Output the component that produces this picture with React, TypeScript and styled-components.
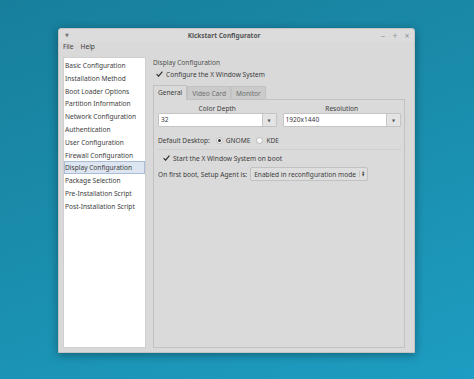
import styled, { createGlobalStyle } from "styled-components";

const GlobalStyle = createGlobalStyle`
  html, body {
    margin: 0;
    padding: 0;
  }
  body {
    font-family: "Noto Sans", "DejaVu Sans", sans-serif;
    font-size: 6.6px;
    color: #3c3c3c;
  }
`;

const Desktop = styled.div`
  width: 474px;
  height: 379px;
  box-sizing: border-box;
  padding: 28px 0 0 58px;
  background: linear-gradient(160deg, #177f9c 0%, #1a8cab 45%, #1d9dc2 100%);
  overflow: hidden;
`;

const Window = styled.div`
  width: 357px;
  height: 325px;
  background: #d9d9d9;
  border: 1px solid #c4c4c4;
  border-radius: 3px 3px 0 0;
  box-sizing: border-box;
  box-shadow: 0 2px 10px rgba(0, 0, 0, 0.35);
  display: flex;
  flex-direction: column;
`;

const TitleBar = styled.div`
  height: 13px;
  flex: none;
  display: flex;
  align-items: center;
  padding: 0 3px 0 6px;
  background: #dcdcdc;
  border-radius: 3px 3px 0 0;
  line-height: 13px;
  overflow: hidden;
`;

const MenuArrow = styled.span`
  width: 8px;
  font-size: 5px;
  color: #777;
`;

const Title = styled.div`
  flex: 1;
  text-align: center;
  font-weight: 700;
  color: #555;
  font-size: 6.5px;
  padding-right: 4px;
`;

const WinButtons = styled.div`
  display: flex;
  gap: 4px;
  color: #8e8e8e;
  font-size: 8px;
`;

const WinButton = styled.span`
  width: 8px;
  text-align: center;
`;

const MenuBar = styled.div`
  display: flex;
  flex: none;
  gap: 7px;
  padding: 0 4px;
  height: 10px;
  line-height: 10px;
  align-items: center;
`;

const Body = styled.div`
  flex: 1;
  display: flex;
  gap: 7px;
  padding: 5px 9px 4px 4px;
  min-height: 0;
`;

const Sidebar = styled.ul`
  list-style: none;
  margin: 0;
  padding: 1px 0 0;
  width: 83px;
  background: #fff;
  border: 1px solid #cfcfcf;
  box-sizing: border-box;
`;

const SideItem = styled.li<{ selected?: boolean }>`
  height: 12.8px;
  line-height: 11px;
  padding-left: 0;
  box-sizing: border-box;
  white-space: nowrap;
  background: ${(p) => (p.selected ? "#dde5f0" : "transparent")};
  border: 1px solid ${(p) => (p.selected ? "#a9bcd8" : "transparent")};
`;

const Main = styled.div`
  flex: 1;
  display: flex;
  flex-direction: column;
`;

const Heading = styled.div`
  height: 11px;
  line-height: 11px;
  color: #505050;
`;

const CheckRow = styled.label<{ indent?: number }>`
  display: flex;
  align-items: center;
  gap: 3px;
  height: 12px;
  padding-left: ${(p) => p.indent ?? 3}px;
`;

const Check = styled.span`
  width: 7px;
  display: flex;
  justify-content: center;
`;

const Tabs = styled.div`
  display: flex;
  align-items: flex-end;
  height: 15px;
  margin-top: 4px;
`;

const Tab = styled.div<{ active?: boolean }>`
  height: ${(p) => (p.active ? 15 : 13)}px;
  line-height: 13px;
  padding: 0 4px;
  box-sizing: border-box;
  background: ${(p) => (p.active ? "#dadada" : "#cbcbcb")};
  color: ${(p) => (p.active ? "#3c3c3c" : "#6e6e6e")};
  border: 1px solid #c2c2c2;
  border-bottom: none;
  margin-bottom: ${(p) => (p.active ? -1 : 0)}px;
  position: relative;
  z-index: ${(p) => (p.active ? 1 : 0)};
`;

const Pane = styled.div`
  flex: 1;
  border: 1px solid #c2c2c2;
  background: #dadada;
  padding: 3px 3px 0 4px;
  display: flex;
  flex-direction: column;
`;

const Columns = styled.div`
  display: grid;
  grid-template-columns: 1fr 1fr;
  gap: 6px;
`;

const Column = styled.div`
  display: flex;
  flex-direction: column;
`;

const ColLabel = styled.div`
  text-align: center;
  height: 10px;
  line-height: 11px;
`;

const Combo = styled.div`
  display: flex;
  height: 14px;
  background: #fff;
  border: 1px solid #c4c4c4;
  box-sizing: border-box;
  border-radius: 1px;
`;

const ComboText = styled.div`
  flex: 1;
  padding-left: 2px;
  line-height: 12px;
`;

const ComboBtn = styled.div`
  width: 13px;
  border-left: 1px solid #c8c8c8;
  background: #e4e4e4;
  display: flex;
  align-items: center;
  justify-content: center;
  font-size: 4px;
  color: #555;
`;

const Row = styled.div<{ top: number }>`
  display: flex;
  align-items: center;
  height: 14px;
  gap: 3px;
  margin-top: ${(p) => p.top}px;
`;

const Radio = styled.span<{ on?: boolean }>`
  width: 7px;
  height: 7px;
  border-radius: 50%;
  background: #fafafa;
  border: 1px solid #bbb;
  box-sizing: border-box;
  display: inline-flex;
  align-items: center;
  justify-content: center;
  margin-left: 3px;
  &::after {
    content: "";
    width: 3px;
    height: 3px;
    border-radius: 50%;
    background: ${(p) => (p.on ? "#333" : "transparent")};
  }
`;

const Separator = styled.div`
  height: 1px;
  background: #cecece;
  margin: 2px 0 2px;
`;

const SpinCombo = styled.div`
  display: flex;
  align-items: center;
  height: 14px;
  padding: 0 3px;
  gap: 3px;
  border: 1px solid #c2c2c2;
  border-radius: 2px;
  background: #dedede;
  box-sizing: border-box;
`;

const Arrows = styled.span`
  display: flex;
  flex-direction: column;
  font-size: 3px;
  line-height: 3px;
  color: #444;
  border-left: 1px solid #c4c4c4;
  padding-left: 2px;
`;

const CheckMark = () => (
  <svg width="7" height="6" viewBox="0 0 7 6">
    <path d="M0.6 3.2 L2.6 5.2 L6.4 0.6" fill="none" stroke="#333" strokeWidth="1.2" />
  </svg>
);

const sections = [
  "Basic Configuration",
  "Installation Method",
  "Boot Loader Options",
  "Partition Information",
  "Network Configuration",
  "Authentication",
  "User Configuration",
  "Firewall Configuration",
  "Display Configuration",
  "Package Selection",
  "Pre-Installation Script",
  "Post-Installation Script",
];

export default function App() {
  return (
    <>
      <GlobalStyle />
      <Desktop>
        <Window>
          <TitleBar>
            <MenuArrow>▼</MenuArrow>
            <Title>Kickstart Configurator</Title>
            <WinButtons>
              <WinButton>−</WinButton>
              <WinButton>+</WinButton>
              <WinButton>×</WinButton>
            </WinButtons>
          </TitleBar>
          <MenuBar>
            <span>File</span>
            <span>Help</span>
          </MenuBar>
          <Body>
            <Sidebar>
              {sections.map((s) => (
                <SideItem key={s} selected={s === "Display Configuration"}>
                  {s}
                </SideItem>
              ))}
            </Sidebar>
            <Main>
              <Heading>Display Configuration</Heading>
              <CheckRow>
                <Check><CheckMark /></Check>
                Configure the X Window System
              </CheckRow>
              <Tabs>
                <Tab active>General</Tab>
                <Tab>Video Card</Tab>
                <Tab>Monitor</Tab>
              </Tabs>
              <Pane>
                <Columns>
                  <Column>
                    <ColLabel>Color Depth</ColLabel>
                    <Combo>
                      <ComboText>32</ComboText>
                      <ComboBtn>▼</ComboBtn>
                    </Combo>
                  </Column>
                  <Column>
                    <ColLabel>Resolution</ColLabel>
                    <Combo>
                      <ComboText>1920x1440</ComboText>
                      <ComboBtn>▼</ComboBtn>
                    </Combo>
                  </Column>
                </Columns>
                <Row top={6}>
                  <span>Default Desktop:</span>
                  <Radio on />
                  <span>GNOME</span>
                  <Radio />
                  <span>KDE</span>
                </Row>
                <Separator />
                <CheckRow indent={5}>
                  <Check><CheckMark /></Check>
                  Start the X Window System on boot
                </CheckRow>
                <Row top={3}>
                  <span>On first boot, Setup Agent is:</span>
                  <SpinCombo>
                    Enabled in reconfiguration mode
                    <Arrows>
                      <span>▲</span>
                      <span>▼</span>
                    </Arrows>
                  </SpinCombo>
                </Row>
              </Pane>
            </Main>
          </Body>
        </Window>
      </Desktop>
    </>
  );
}
